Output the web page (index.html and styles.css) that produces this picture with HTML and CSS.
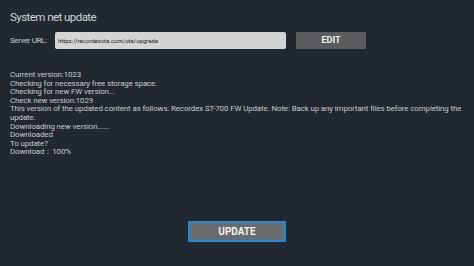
FILE: index.html
```html
<!DOCTYPE html>
<html>
<head>
<meta charset="utf-8">
<link rel="stylesheet" href="styles.css">
</head>
<body>
<div class="screen">
  <h1 class="title">System net update</h1>
  <div class="url-row">
    <span class="url-label">Server URL:</span>
    <div class="url-input">https://recordexota.com/ota/upgrade</div>
    <div class="btn-edit">EDIT</div>
  </div>
  <div class="log">
    <div>Current version:1023</div>
    <div>Checking for necessary free storage space.</div>
    <div>Checking for new FW version...</div>
    <div>Check new version:1029</div>
    <div>This version of the updated content as follows: Recordex ST-700 FW Update. Note: Back up any important files before completing the update.</div>
    <div>Downloading new version......</div>
    <div>Downloaded</div>
    <div>To update?</div>
    <div>Download：100%</div>
  </div>
  <div class="footer">
    <div class="btn-update">UPDATE</div>
  </div>
</div>
</body>
</html>
```
FILE: styles.css
```css
html, body {
  margin: 0;
  padding: 0;
  background: #22282f;
}
.screen {
  width: 474px;
  height: 266px;
  box-sizing: border-box;
  padding: 10px 10px 0 10px;
  display: flex;
  flex-direction: column;
  font-family: Roboto, "Liberation Sans", sans-serif;
  color: #c9cbcd;
}
.title {
  margin: 0;
  font-size: 11.5px;
  letter-spacing: -0.55px;
  font-weight: normal;
  line-height: 15px;
  color: #d0d2d4;
}
.url-row {
  display: flex;
  align-items: center;
  margin-top: 7px;
  height: 17px;
}
.url-label {
  flex-shrink: 0;
  white-space: nowrap;
  font-size: 8px;
  letter-spacing: -0.4px;
  width: 45px;
  color: #c9cbcd;
}
.url-input {
  flex-shrink: 0;
  width: 231px;
  height: 17px;
  box-sizing: border-box;
  background: #d4d4d4;
  border-radius: 2px;
  color: #222;
  font-size: 6px;
  line-height: 17px;
  padding-left: 3px;
}
.btn-edit {
  flex-shrink: 0;
  margin-left: 10px;
  width: 70px;
  height: 17px;
  background: #5b5c5e;
  color: #f0f0f0;
  font-weight: bold;
  font-size: 9px;
  line-height: 17px;
  text-align: center;
}
.log {
  margin-top: 22px;
  font-size: 7.9px;
  letter-spacing: -0.1px;
  line-height: 8.6px;
  width: 452px;
  color: #c8cacc;
}
.footer {
  display: flex;
  justify-content: center;
  margin-top: auto;
  margin-bottom: 24px;
}
.btn-update {
  width: 98px;
  height: 21px;
  box-sizing: border-box;
  border: 2px solid #1f8ad8;
  background: #6a6b6d;
  color: #f2f2f2;
  font-weight: bold;
  font-size: 10px;
  line-height: 17px;
  text-align: center;
}
```
